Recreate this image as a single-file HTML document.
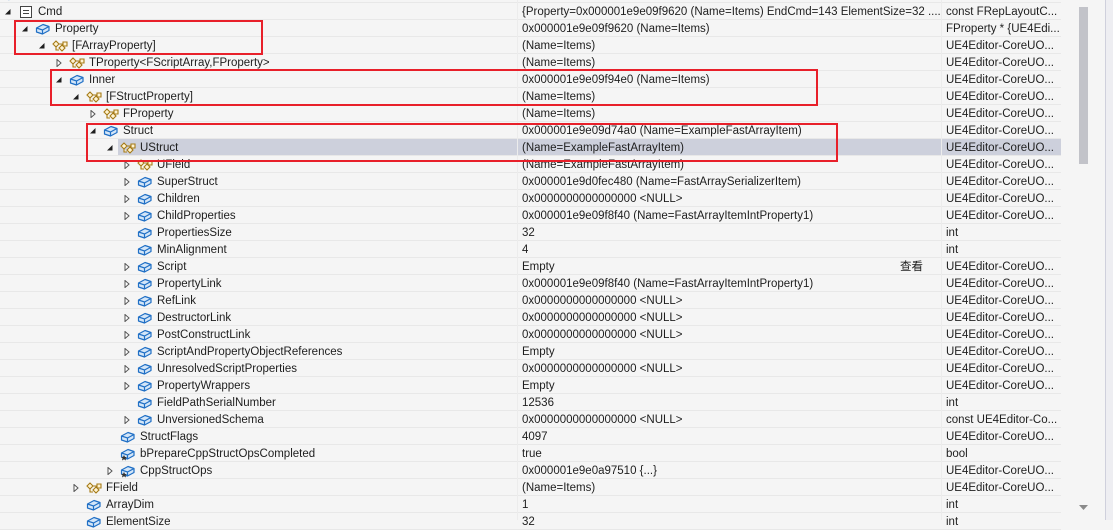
<!DOCTYPE html>
<html><head><meta charset="utf-8"><style>
html,body{margin:0;padding:0;width:1113px;height:520px;overflow:hidden;background:#f5f5f5;font-family:"Liberation Sans","Noto Sans CJK SC",sans-serif;font-size:11.5px;color:#1e1e1e}
.r{position:absolute;left:0;width:1061px;height:16px;border-bottom:1px solid #e8e8e8}
.r span{position:absolute;top:2px;white-space:nowrap;line-height:15px}
.r .v{left:522px;max-width:418px;overflow:hidden}.r .t{left:946px}
.r svg{position:absolute}
.a{top:5px}.i{top:2px}
.hl{background:#cdd0dc}
.vl{position:absolute;top:0;width:1px;height:520px;background:#ececec}
.box{position:absolute;border:2px solid #e8202a;box-sizing:border-box}
</style></head><body>
<svg width="0" height="0" style="position:absolute">
<defs>
<symbol id="bl" viewBox="0 0 15 14"><path d="M1.5 6 L8 2.5 L14 4.5 L14 8.5 L7.5 12 L1.5 10 Z" fill="#d4e6f8" stroke="#1f6fc5" stroke-width="1.2" stroke-linejoin="round"/><path d="M1.5 6 L7.5 8 L14 4.5 M7.5 8 V12" fill="none" stroke="#1f6fc5" stroke-width="1.2"/></symbol>
<symbol id="bs" viewBox="0 0 15 14"><path d="M1.5 6 L8 2.5 L14 4.5 L14 8.5 L7.5 12 L1.5 10 Z" fill="#d4e6f8" stroke="#1f6fc5" stroke-width="1.2" stroke-linejoin="round"/><path d="M1.5 6 L7.5 8 L14 4.5 M7.5 8 V12" fill="none" stroke="#1f6fc5" stroke-width="1.2"/><path d="M4 8 L5 10 L7 10 L5.5 11.3 L6 13.5 L4 12.2 L2 13.5 L2.5 11.3 L1 10 L3 10Z" fill="#333"/></symbol>
<symbol id="gd" viewBox="0 0 17 15"><path d="M1 5 L4 2 L7 5 L4 8Z M7 9 L10 6 L13 9 L10 12Z M11 3 h4 v4 h-4Z M4 8 V11 H7 M7 5 H11" fill="#fff3d0" stroke="#a57a16" stroke-width="1.1"/></symbol>
<symbol id="ao" viewBox="0 0 8 8"><path d="M6.5 1 L6.5 6.5 L1 6.5Z" fill="#1e1e1e"/></symbol>
<symbol id="ac" viewBox="0 0 8 8"><path d="M2 0.5 L6 4 L2 7.5Z" fill="#fff" stroke="#555"/></symbol>
</defs></svg>

<div class="r" style="top:-14px"><svg class="i" style="left:2px" width="14" height="14"><use href="#bl"/></svg></div>

<div class="r" style="top:3px"><svg class="a" style="left:4px" width="8" height="8"><use href="#ao"/></svg><svg class="i" style="left:20px;top:3px" width="12" height="12"><rect x="0.5" y="0.5" width="11" height="11" fill="#fff" stroke="#444"/><path d="M3 4.5h6M3 7.5h6" stroke="#444"/></svg><span style="left:38px">Cmd</span><span class="v">{Property=0x000001e9e09f9620 (Name=Items) EndCmd=143 ElementSize=32 ....</span><span class="t">const FRepLayoutC...</span></div>

<div class="r" style="top:20px"><svg class="a" style="left:21px" width="8" height="8"><use href="#ao"/></svg><svg class="i" style="left:35px" width="15" height="14"><use href="#bl"/></svg><span style="left:55px">Property</span><span class="v">0x000001e9e09f9620 (Name=Items)</span><span class="t">FProperty * {UE4Edi...</span></div>

<div class="r" style="top:37px"><svg class="a" style="left:38px" width="8" height="8"><use href="#ao"/></svg><svg class="i" style="left:52px" width="17" height="15"><use href="#gd"/></svg><span style="left:72px">[FArrayProperty]</span><span class="v">(Name=Items)</span><span class="t">UE4Editor-CoreUO...</span></div>

<div class="r" style="top:54px"><svg class="a" style="left:55px" width="8" height="8"><use href="#ac"/></svg><svg class="i" style="left:69px" width="17" height="15"><use href="#gd"/></svg><span style="left:89px">TProperty&lt;FScriptArray,FProperty&gt;</span><span class="v">(Name=Items)</span><span class="t">UE4Editor-CoreUO...</span></div>

<div class="r" style="top:71px"><svg class="a" style="left:55px" width="8" height="8"><use href="#ao"/></svg><svg class="i" style="left:69px" width="15" height="14"><use href="#bl"/></svg><span style="left:89px">Inner</span><span class="v">0x000001e9e09f94e0 (Name=Items)</span><span class="t">UE4Editor-CoreUO...</span></div>

<div class="r" style="top:88px"><svg class="a" style="left:72px" width="8" height="8"><use href="#ao"/></svg><svg class="i" style="left:86px" width="17" height="15"><use href="#gd"/></svg><span style="left:106px">[FStructProperty]</span><span class="v">(Name=Items)</span><span class="t">UE4Editor-CoreUO...</span></div>

<div class="r" style="top:105px"><svg class="a" style="left:89px" width="8" height="8"><use href="#ac"/></svg><svg class="i" style="left:103px" width="17" height="15"><use href="#gd"/></svg><span style="left:123px">FProperty</span><span class="v">(Name=Items)</span><span class="t">UE4Editor-CoreUO...</span></div>

<div class="r" style="top:122px"><svg class="a" style="left:89px" width="8" height="8"><use href="#ao"/></svg><svg class="i" style="left:103px" width="15" height="14"><use href="#bl"/></svg><span style="left:123px">Struct</span><span class="v">0x000001e9e09d74a0 (Name=ExampleFastArrayItem)</span><span class="t">UE4Editor-CoreUO...</span></div>

<div class="r" style="top:139px"><div class="hl" style="position:absolute;left:118px;top:0;width:943px;height:16px"></div><svg class="a" style="left:106px" width="8" height="8"><use href="#ao"/></svg><svg class="i" style="left:120px" width="17" height="15"><use href="#gd"/></svg><span style="left:140px">UStruct</span><span class="v">(Name=ExampleFastArrayItem)</span><span class="t">UE4Editor-CoreUO...</span></div>

<div class="r" style="top:156px"><svg class="a" style="left:123px" width="8" height="8"><use href="#ac"/></svg><svg class="i" style="left:137px" width="17" height="15"><use href="#gd"/></svg><span style="left:157px">UField</span><span class="v">(Name=ExampleFastArrayItem)</span><span class="t">UE4Editor-CoreUO...</span></div>

<div class="r" style="top:173px"><svg class="a" style="left:123px" width="8" height="8"><use href="#ac"/></svg><svg class="i" style="left:137px" width="15" height="14"><use href="#bl"/></svg><span style="left:157px">SuperStruct</span><span class="v">0x000001e9d0fec480 (Name=FastArraySerializerItem)</span><span class="t">UE4Editor-CoreUO...</span></div>

<div class="r" style="top:190px"><svg class="a" style="left:123px" width="8" height="8"><use href="#ac"/></svg><svg class="i" style="left:137px" width="15" height="14"><use href="#bl"/></svg><span style="left:157px">Children</span><span class="v">0x0000000000000000 &lt;NULL&gt;</span><span class="t">UE4Editor-CoreUO...</span></div>

<div class="r" style="top:207px"><svg class="a" style="left:123px" width="8" height="8"><use href="#ac"/></svg><svg class="i" style="left:137px" width="15" height="14"><use href="#bl"/></svg><span style="left:157px">ChildProperties</span><span class="v">0x000001e9e09f8f40 (Name=FastArrayItemIntProperty1)</span><span class="t">UE4Editor-CoreUO...</span></div>

<div class="r" style="top:224px"><svg class="i" style="left:137px" width="15" height="14"><use href="#bl"/></svg><span style="left:157px">PropertiesSize</span><span class="v">32</span><span class="t">int</span></div>

<div class="r" style="top:241px"><svg class="i" style="left:137px" width="15" height="14"><use href="#bl"/></svg><span style="left:157px">MinAlignment</span><span class="v">4</span><span class="t">int</span></div>

<div class="r" style="top:258px"><svg class="a" style="left:123px" width="8" height="8"><use href="#ac"/></svg><svg class="i" style="left:137px" width="15" height="14"><use href="#bl"/></svg><span style="left:157px">Script</span><span class="v">Empty</span><span style="left:900px">查看</span><span class="t">UE4Editor-CoreUO...</span></div>

<div class="r" style="top:275px"><svg class="a" style="left:123px" width="8" height="8"><use href="#ac"/></svg><svg class="i" style="left:137px" width="15" height="14"><use href="#bl"/></svg><span style="left:157px">PropertyLink</span><span class="v">0x000001e9e09f8f40 (Name=FastArrayItemIntProperty1)</span><span class="t">UE4Editor-CoreUO...</span></div>

<div class="r" style="top:292px"><svg class="a" style="left:123px" width="8" height="8"><use href="#ac"/></svg><svg class="i" style="left:137px" width="15" height="14"><use href="#bl"/></svg><span style="left:157px">RefLink</span><span class="v">0x0000000000000000 &lt;NULL&gt;</span><span class="t">UE4Editor-CoreUO...</span></div>

<div class="r" style="top:309px"><svg class="a" style="left:123px" width="8" height="8"><use href="#ac"/></svg><svg class="i" style="left:137px" width="15" height="14"><use href="#bl"/></svg><span style="left:157px">DestructorLink</span><span class="v">0x0000000000000000 &lt;NULL&gt;</span><span class="t">UE4Editor-CoreUO...</span></div>

<div class="r" style="top:326px"><svg class="a" style="left:123px" width="8" height="8"><use href="#ac"/></svg><svg class="i" style="left:137px" width="15" height="14"><use href="#bl"/></svg><span style="left:157px">PostConstructLink</span><span class="v">0x0000000000000000 &lt;NULL&gt;</span><span class="t">UE4Editor-CoreUO...</span></div>

<div class="r" style="top:343px"><svg class="a" style="left:123px" width="8" height="8"><use href="#ac"/></svg><svg class="i" style="left:137px" width="15" height="14"><use href="#bl"/></svg><span style="left:157px">ScriptAndPropertyObjectReferences</span><span class="v">Empty</span><span class="t">UE4Editor-CoreUO...</span></div>

<div class="r" style="top:360px"><svg class="a" style="left:123px" width="8" height="8"><use href="#ac"/></svg><svg class="i" style="left:137px" width="15" height="14"><use href="#bl"/></svg><span style="left:157px">UnresolvedScriptProperties</span><span class="v">0x0000000000000000 &lt;NULL&gt;</span><span class="t">UE4Editor-CoreUO...</span></div>

<div class="r" style="top:377px"><svg class="a" style="left:123px" width="8" height="8"><use href="#ac"/></svg><svg class="i" style="left:137px" width="15" height="14"><use href="#bl"/></svg><span style="left:157px">PropertyWrappers</span><span class="v">Empty</span><span class="t">UE4Editor-CoreUO...</span></div>

<div class="r" style="top:394px"><svg class="i" style="left:137px" width="15" height="14"><use href="#bl"/></svg><span style="left:157px">FieldPathSerialNumber</span><span class="v">12536</span><span class="t">int</span></div>

<div class="r" style="top:411px"><svg class="a" style="left:123px" width="8" height="8"><use href="#ac"/></svg><svg class="i" style="left:137px" width="15" height="14"><use href="#bl"/></svg><span style="left:157px">UnversionedSchema</span><span class="v">0x0000000000000000 &lt;NULL&gt;</span><span class="t">const UE4Editor-Co...</span></div>

<div class="r" style="top:428px"><svg class="i" style="left:120px" width="15" height="14"><use href="#bl"/></svg><span style="left:140px">StructFlags</span><span class="v">4097</span><span class="t">UE4Editor-CoreUO...</span></div>

<div class="r" style="top:445px"><svg class="i" style="left:120px" width="15" height="14"><use href="#bs"/></svg><span style="left:140px">bPrepareCppStructOpsCompleted</span><span class="v">true</span><span class="t">bool</span></div>

<div class="r" style="top:462px"><svg class="a" style="left:106px" width="8" height="8"><use href="#ac"/></svg><svg class="i" style="left:120px" width="15" height="14"><use href="#bs"/></svg><span style="left:140px">CppStructOps</span><span class="v">0x000001e9e0a97510 {...}</span><span class="t">UE4Editor-CoreUO...</span></div>

<div class="r" style="top:479px"><svg class="a" style="left:72px" width="8" height="8"><use href="#ac"/></svg><svg class="i" style="left:86px" width="17" height="15"><use href="#gd"/></svg><span style="left:106px">FField</span><span class="v">(Name=Items)</span><span class="t">UE4Editor-CoreUO...</span></div>

<div class="r" style="top:496px"><svg class="i" style="left:86px" width="15" height="14"><use href="#bl"/></svg><span style="left:106px">ArrayDim</span><span class="v">1</span><span class="t">int</span></div>

<div class="r" style="top:513px"><svg class="i" style="left:86px" width="15" height="14"><use href="#bl"/></svg><span style="left:106px">ElementSize</span><span class="v">32</span><span class="t">int</span></div>

<div class="vl" style="left:517px"></div>
<div class="vl" style="left:941px"></div>

<div style="position:absolute;left:1079px;top:7px;width:9px;height:157px;background:#c2c3c9"></div>
<svg style="position:absolute;left:1079px;top:505px" width="10" height="6"><path d="M0 0 H9 L4.5 5Z" fill="#8a8a8a"/></svg>
<div style="position:absolute;left:1105px;top:0;width:1px;height:520px;background:#cfd0dc"></div>
<div style="position:absolute;left:1106px;top:0;width:7px;height:520px;background:#eeeef2"></div>

<div class="box" style="left:14px;top:20px;width:249px;height:35px"></div>
<div class="box" style="left:50px;top:69px;width:768px;height:37px"></div>
<div class="box" style="left:86px;top:123px;width:752px;height:39px"></div>
</body></html>
